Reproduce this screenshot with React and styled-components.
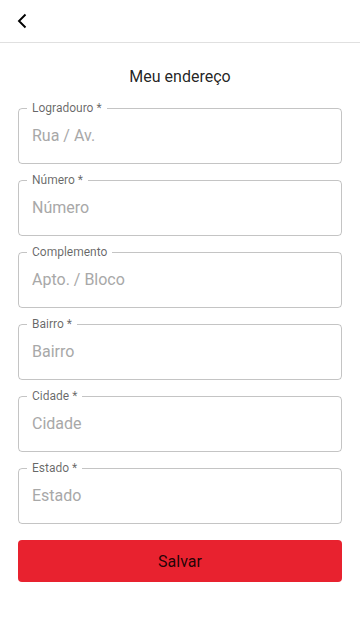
import React from "react";
import styled, { createGlobalStyle } from "styled-components";

const GlobalStyle = createGlobalStyle`
  * { box-sizing: border-box; }
  body {
    margin: 0;
    background: #fff;
    font-family: Roboto, "Liberation Sans", Arial, sans-serif;
    color: rgba(0, 0, 0, 0.87);
  }
`;

const fields = [
  { label: "Logradouro *", placeholder: "Rua / Av." },
  { label: "Número *", placeholder: "Número" },
  { label: "Complemento", placeholder: "Apto. / Bloco" },
  { label: "Bairro *", placeholder: "Bairro" },
  { label: "Cidade *", placeholder: "Cidade" },
  { label: "Estado *", placeholder: "Estado" },
];

function App() {
  return (
    <>
      <GlobalStyle />
      <Page>
        <Header>
          <BackButton aria-label="Voltar">
            <svg width="12" height="16" viewBox="0 0 12 16">
              <path d="M9.5 1.5 L3 8 L9.5 14.5" fill="none" stroke="#000" strokeWidth="1.9" />
            </svg>
          </BackButton>
        </Header>
        <Title>Meu endereço</Title>
        <Form>
          {fields.map((f) => (
            <Field key={f.label}>
              <Legend>{f.label}</Legend>
              <Input placeholder={f.placeholder} />
            </Field>
          ))}
          <SaveButton type="button">Salvar</SaveButton>
        </Form>
      </Page>
    </>
  );
}

const Page = styled.div`
  width: 360px;
  min-height: 636px;
  display: flex;
  flex-direction: column;
`;

const Header = styled.div`
  height: 43px;
  border-bottom: 1px solid #e0e0e0;
  display: flex;
  align-items: center;
  padding-left: 16px;
`;

const BackButton = styled.button`
  border: 0;
  background: none;
  padding: 0;
  margin-top: -1px;
  width: 16px;
  height: 16px;
  display: flex;
  align-items: center;
  cursor: pointer;
`;

const Title = styled.h1`
  margin: 24px 0 0;
  font-size: 16px;
  font-weight: 400;
  line-height: 20px;
  text-align: center;
  color: rgba(0, 0, 0, 0.87);
`;

const Form = styled.form`
  display: flex;
  flex-direction: column;
  gap: 10px;
  padding: 15px 18px 0;
`;

const Field = styled.fieldset`
  margin: 0;
  padding: 0 8px;
  border: 1px solid rgba(0, 0, 0, 0.23);
  border-radius: 4px;
  min-width: 0;
`;

const Legend = styled.legend`
  padding: 0 5px;
  font-size: 12px;
  line-height: 12px;
  color: rgba(0, 0, 0, 0.6);
`;

const Input = styled.input`
  display: block;
  border: 0;
  outline: none;
  background: transparent;
  margin: 0 -8px;
  width: calc(100% + 16px);
  padding: 10px 13px 16px;
  font-family: inherit;
  font-size: 16px;
  line-height: 23px;
  color: rgba(0, 0, 0, 0.87);

  &::placeholder {
    color: #a8a8a8;
    opacity: 1;
  }
`;

const SaveButton = styled.button`
  margin-top: 6px;
  height: 42px;
  border: 0;
  border-radius: 4px;
  background: #e8222f;
  color: rgba(0, 0, 0, 0.87);
  font-family: inherit;
  font-size: 16px;
  cursor: pointer;
`;

export default App;
